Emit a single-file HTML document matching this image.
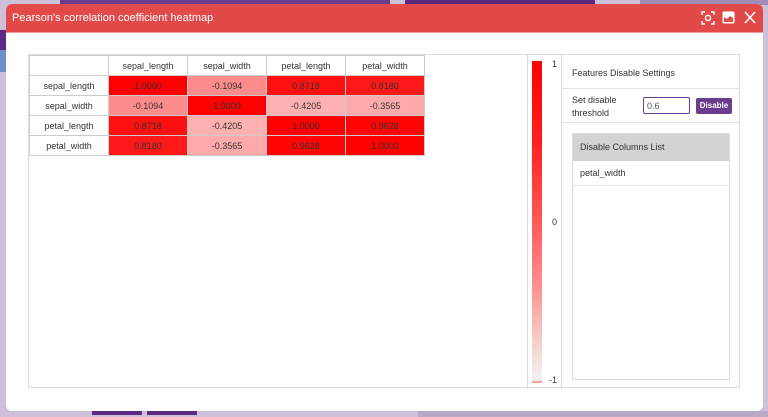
<!DOCTYPE html>
<html><head><meta charset="utf-8"><style>
*{margin:0;padding:0;box-sizing:border-box}
body{width:768px;height:417px;overflow:hidden;background:#cfc0da;font-family:"Liberation Sans",Arial,sans-serif;position:relative}
.top1{position:absolute;left:60px;top:0;width:330px;height:5px;background:#6a3d8e}
.top2{position:absolute;left:405px;top:0;width:190px;height:5px;background:#5a2a7d}
.top3{position:absolute;left:640px;top:0;width:128px;height:5px;background:#9f8db5}
.lstrip{position:absolute;left:0;top:30px;width:6px;height:20px;background:#5b2a82}
.lstrip2{position:absolute;left:0;top:50px;width:6px;height:22px;background:#6f8fc8}
.bot{position:absolute;left:418px;top:411px;width:350px;height:6px;background:#b9a9c8}
.b1{position:absolute;left:92px;top:411px;width:50px;height:4px;background:#5b2a82}
.b2{position:absolute;left:147px;top:411px;width:50px;height:4px;background:#5b2a82}
.modal{position:absolute;left:6px;top:4px;width:757px;height:407px;background:#fff;border-radius:6px;overflow:hidden}
.hdr{height:29px;background:#e24a4a;color:#fff;font-size:11px;line-height:29px;padding-left:6px;border-bottom:1px solid #f39a9a}
.ic{position:absolute;top:7px}
.panel{position:absolute;left:22px;top:50px;width:712px;height:334px;border:1px solid #ddd}
table{position:absolute;left:0;top:0;border-collapse:collapse;font-size:9px;color:#333}
td{border:1px solid #ccc;width:79px;height:20px;text-align:center;color:#333}
td.h{background:#fff}
.cb{position:absolute;left:503px;top:6px;width:10px;height:322px;background:linear-gradient(#ff0000 0%,#ff2020 25%,#ff5a5a 50%,#ff9090 70%,#f5d0c8 87%,#f2f2f2 99%,#f08080 100%)}
.sep{position:absolute;top:0;height:334px;border-left:1px solid #ddd}
.lab{position:absolute;font-size:9px;color:#333}
.rp{position:absolute;left:533px;top:0;width:178px;height:334px}
.t1{position:absolute;left:10px;top:13px;font-size:9px;color:#333}
.ln{position:absolute;left:0;width:178px;border-top:1px solid #e3e3e3}
.t2{position:absolute;left:10px;top:39px;font-size:9px;color:#333;line-height:13px}
.inp{position:absolute;left:81px;top:42px;width:47px;height:17px;border:1px solid #6a3d8e;border-radius:2px;font-size:9px;color:#555;padding:3px 3px}
.btn{position:absolute;left:134px;top:43px;width:36px;height:16px;background:#6a3d8e;color:#fff;font-size:8px;font-weight:bold;text-align:center;line-height:16px;border-radius:2px}
.list{position:absolute;left:10px;top:78px;width:158px;height:247px;border:1px solid #ddd}
.lh{height:27px;background:#d3d3d5;font-size:9px;color:#333;line-height:27px;padding-left:7px}
.li{height:25px;border-bottom:1px solid #e6e6e6;font-size:9px;color:#333;line-height:25px;padding-left:7px}
</style></head><body>
<div class="top1"></div><div class="top2"></div><div class="top3"></div>
<div class="lstrip"></div><div class="lstrip2"></div>
<div class="bot"></div><div class="b1"></div><div class="b2"></div>
<div class="modal">
<div class="hdr">Pearson's correlation coefficient heatmap</div>
<svg class="ic" style="left:695px" width="14" height="14" viewBox="0 0 14 14" fill="none" stroke="#fff" stroke-width="1.4"><path d="M1 4V1h3M10 1h3v3M13 10v3h-3M4 13H1v-3"/><circle cx="7" cy="7" r="2.6"/></svg>
<svg class="ic" style="left:716px" width="13" height="14" viewBox="0 0 13 14"><rect x="0.5" y="0.5" width="12" height="12" rx="1.5" fill="#fff"/><path d="M2 6l3 2 3-3 3 2v4H2z" fill="#e24a4a"/></svg>
<svg class="ic" style="left:738px" width="12" height="14" viewBox="0 0 12 14" stroke="#fff" stroke-width="1.6"><path d="M1 1l10 11M11 1L1 12"/></svg>
<div class="panel">
<table>
<tr><td class="h"></td><td class="h">sepal_length</td><td class="h">sepal_width</td><td class="h">petal_length</td><td class="h">petal_width</td></tr>
<tr><td class="h">sepal_length</td><td style="background:#ff0000">1.0000</td><td style="background:#ff8c8c">-0.1094</td><td style="background:#ff1010">0.8718</td><td style="background:#ff1818">0.8180</td></tr>
<tr><td class="h">sepal_width</td><td style="background:#ff8c8c">-0.1094</td><td style="background:#ff0000">1.0000</td><td style="background:#ffb0b0">-0.4205</td><td style="background:#ffaaaa">-0.3565</td></tr>
<tr><td class="h">petal_length</td><td style="background:#ff1010">0.8718</td><td style="background:#ffb0b0">-0.4205</td><td style="background:#ff0000">1.0000</td><td style="background:#ff0505">0.9628</td></tr>
<tr><td class="h">petal_width</td><td style="background:#ff1818">0.8180</td><td style="background:#ffaaaa">-0.3565</td><td style="background:#ff0505">0.9628</td><td style="background:#ff0000">1.0000</td></tr>
</table>
<div class="sep" style="left:498px"></div>
<div class="cb"></div>
<div class="lab" style="left:523px;top:4px">1</div>
<div class="lab" style="left:523px;top:162px">0</div>
<div class="lab" style="left:520px;top:320px">-1</div>
<div class="sep" style="left:532px"></div>
<div class="rp">
<div class="t1">Features Disable Settings</div>
<div class="ln" style="top:33px"></div>
<div class="t2">Set disable<br>threshold</div>
<div class="inp">0.6</div>
<div class="btn">Disable</div>
<div class="ln" style="top:67px"></div>
<div class="list"><div class="lh">Disable Columns List</div><div class="li">petal_width</div></div>
</div>
</div>
</div>
</body></html>
